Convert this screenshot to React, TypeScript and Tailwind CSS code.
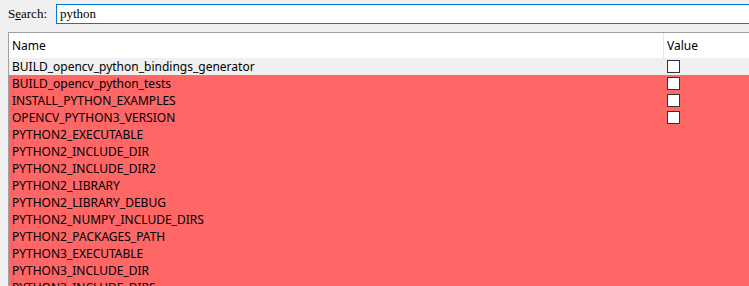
const rows: { name: string; red: boolean; check: boolean }[] = [
  { name: "BUILD_opencv_python_bindings_generator", red: false, check: true },
  { name: "BUILD_opencv_python_tests", red: true, check: true },
  { name: "INSTALL_PYTHON_EXAMPLES", red: true, check: true },
  { name: "OPENCV_PYTHON3_VERSION", red: true, check: true },
  { name: "PYTHON2_EXECUTABLE", red: true, check: false },
  { name: "PYTHON2_INCLUDE_DIR", red: true, check: false },
  { name: "PYTHON2_INCLUDE_DIR2", red: true, check: false },
  { name: "PYTHON2_LIBRARY", red: true, check: false },
  { name: "PYTHON2_LIBRARY_DEBUG", red: true, check: false },
  { name: "PYTHON2_NUMPY_INCLUDE_DIRS", red: true, check: false },
  { name: "PYTHON2_PACKAGES_PATH", red: true, check: false },
  { name: "PYTHON3_EXECUTABLE", red: true, check: false },
  { name: "PYTHON3_INCLUDE_DIR", red: true, check: false },
  { name: "PYTHON3_INCLUDE_DIRS", red: true, check: false },
]

export default function App() {
  return (
    <div className="w-[749px] h-[286px] overflow-hidden bg-[#f0f0f0] text-[12px] text-black font-['Noto_Sans','Liberation_Sans',sans-serif]">
      <div className="flex items-center h-[24px] pt-[4px]">
        <label className="pl-[8px] w-[56px] font-['Liberation_Serif',serif] text-[13px]">
          S<span className="underline">e</span>arch:
        </label>
        <div className="flex-1 h-[20px] bg-white border border-[#0078d7] border-r-0 flex items-center pl-[3px] font-['Liberation_Serif',serif] text-[13px]">
          python
        </div>
      </div>
      <div className="ml-[8px] mt-[8px] border-t border-l border-[#a0a0a0] bg-white h-[262px] overflow-hidden">
        <div className="flex h-[25px] items-center bg-white">
          <div className="w-[655px] pl-[3px] border-r border-[#e5e5e5] h-full flex items-center">Name</div>
          <div className="pl-[3px]">Value</div>
        </div>
        {rows.map((r) => (
          <div
            key={r.name}
            className={`flex h-[17px] items-center ${r.red ? "bg-[#ff6666]" : "bg-[#f0f0f0]"}`}
          >
            <div className="w-[656px] pl-[3px] leading-[17px] whitespace-nowrap">{r.name}</div>
            {r.check && (
              <div className="ml-[2px] w-[13px] h-[13px] bg-white border border-[#333333]" />
            )}
          </div>
        ))}
      </div>
    </div>
  )
}
